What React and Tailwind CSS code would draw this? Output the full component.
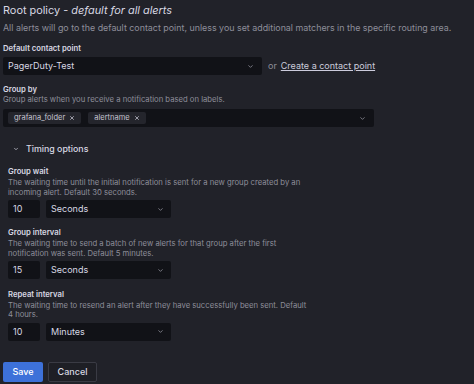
import React from 'react';
import { ChevronDown, X } from 'lucide-react';

function Select({ value, className }) {
  return (
    <div className={`flex items-center justify-between bg-[#111217] rounded-[2px] pl-[5px] pr-[7px] ${className}`}>
      <span className="text-[9px] text-[#d8d8e3]">{value}</span>
      <ChevronDown className="w-[7px] h-[7px] text-[#9a9aa6]" strokeWidth={2.5} />
    </div>
  );
}

function Timing({ label, desc, num, unit, className }) {
  return (
    <div className={`flex flex-col ${className}`}>
      <div className="text-[7.7px] font-semibold text-[#d8d8e3] leading-[10px]">{label}</div>
      <div className="mt-[1px] text-[7.7px] text-[#8e8e9a] leading-[9.5px] w-[300px]">{desc}</div>
      <div className="flex gap-[6px] mt-[3px]">
        <div className="w-[32px] h-[18px] bg-[#111217] rounded-[2px] flex items-center px-[5px] text-[9px] text-[#d8d8e3]">{num}</div>
        <Select value={unit} className="w-[125px] h-[18px]" />
      </div>
    </div>
  );
}

export default function App() {
  return (
    <div className="w-[474px] h-[384px] bg-[#212229] overflow-hidden px-[3px] pt-[4px]" style={{ fontFamily: 'Inter, "Liberation Sans", sans-serif' }}>
      <h1 className="text-[10.9px] text-[#d8d8e3] leading-[12px]">
        Root policy - <span className="italic">default for all alerts</span>
      </h1>
      <p className="text-[8.9px] text-[#8e8e9a] mt-[6px] leading-[12px]">
        All alerts will go to the default contact point, unless you set additional matchers in the specific routing area.
      </p>

      <div className="mt-[10px] text-[7.7px] font-semibold text-[#d8d8e3] leading-[10px]">Default contact point</div>
      <div className="flex items-center mt-[3px]">
        <Select value="PagerDuty-Test" className="w-[259px] h-[18px] pr-[8px]" />
        <span className="ml-[6px] text-[9px] text-[#8e8e9a]">or</span>
        <a href="#" className="ml-[4px] text-[9px] text-[#ccccdc] underline">Create a contact point</a>
      </div>

      <div className="mt-[10px] text-[7.7px] font-semibold text-[#d8d8e3] leading-[10px]">Group by</div>
      <div className="text-[7.7px] text-[#8e8e9a] leading-[10px]">Group alerts when you receive a notification based on labels.</div>
      <div className="mt-[4px] w-[371px] h-[18px] bg-[#111217] rounded-[2px] flex items-center justify-between pl-[5px] pr-[8px]">
        <div className="flex gap-[7px]">
          <span className="flex items-center gap-[4px] bg-[#24252c] text-[#c4c4d0] text-[7.5px] h-[12px] px-[6px] rounded-[2px]">
            grafana_folder <X className="w-[6px] h-[6px]" strokeWidth={3} />
          </span>
          <span className="flex items-center gap-[4px] bg-[#24252c] text-[#c4c4d0] text-[7.5px] h-[12px] px-[6px] rounded-[2px]">
            alertname <X className="w-[6px] h-[6px]" strokeWidth={3} />
          </span>
        </div>
        <ChevronDown className="w-[7px] h-[7px] text-[#9a9aa6]" strokeWidth={2.5} />
      </div>

      <div className="mt-[16px] h-[12px] flex items-center gap-[7px] pl-[10px]">
        <ChevronDown className="w-[6px] h-[6px] text-[#c4c4d0]" strokeWidth={3} />
        <span className="text-[8.8px] font-medium text-[#d8d8e3] leading-[12px]">Timing options</span>
      </div>

      <div className="pl-[5px] mt-[12px] flex flex-col">
        <Timing
          label="Group wait"
          desc="The waiting time until the initial notification is sent for a new group created by an incoming alert. Default 30 seconds."
          num="10"
          unit="Seconds"
        />
        <Timing
          className="mt-[10px]"
          label="Group interval"
          desc="The waiting time to send a batch of new alerts for that group after the first notification was sent. Default 5 minutes."
          num="15"
          unit="Seconds"
        />
        <Timing
          className="mt-[10.5px]"
          label="Repeat interval"
          desc="The waiting time to resend an alert after they have successfully been sent. Default 4 hours."
          num="10"
          unit="Minutes"
        />
      </div>

      <div className="flex gap-[5px] mt-[21px]">
        <button className="w-[40px] h-[20px] bg-[#3d71d9] text-white text-[9px] font-medium rounded-[2px]">Save</button>
        <button className="w-[49px] h-[20px] bg-[#1e1f25] border border-[#3a3b44] text-[#d8d8e3] text-[9px] font-medium rounded-[2px]">Cancel</button>
      </div>
    </div>
  );
}
